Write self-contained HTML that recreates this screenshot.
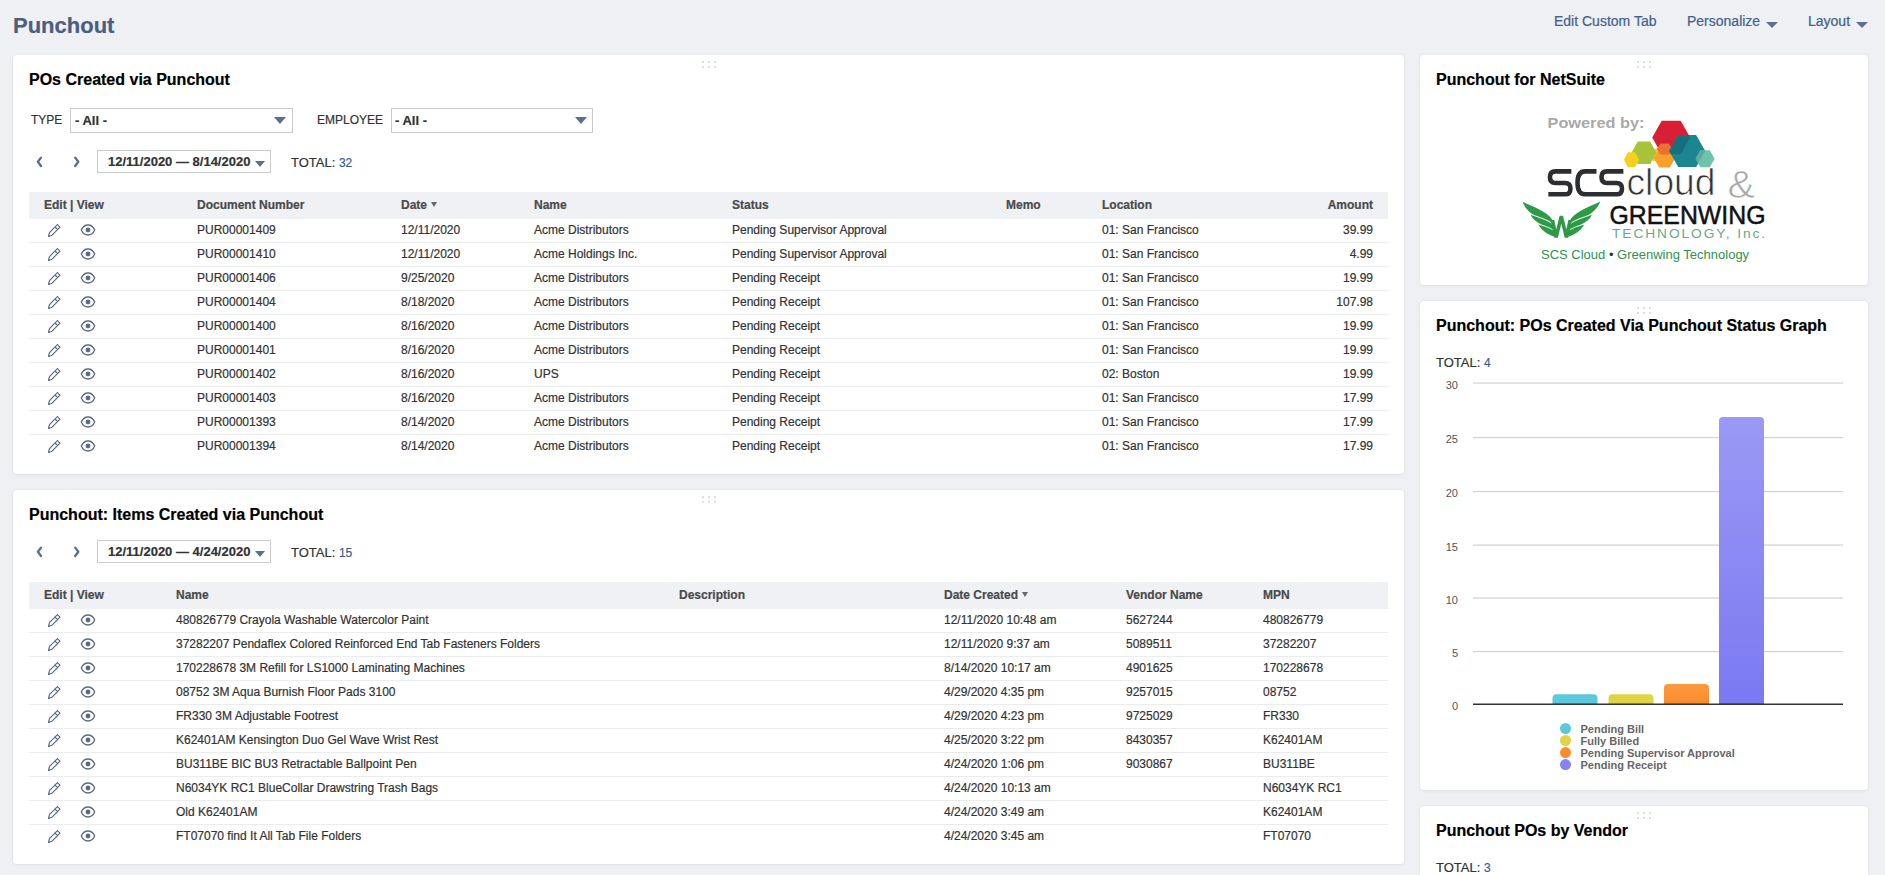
<!DOCTYPE html>
<html><head><meta charset="utf-8"><style>
*{box-sizing:border-box;margin:0;padding:0}
html,body{width:1885px;height:875px;overflow:hidden}
body{background:#eef0f3;font-family:"Liberation Sans",sans-serif;color:#333;position:relative;-webkit-text-stroke:0.2px currentColor}
.pt{position:absolute;left:13px;top:11px;font-size:22px;font-weight:bold;color:#4c5e7c;line-height:30px}
.tl{position:absolute;top:12px;font-size:14px;color:#41608f;line-height:18px;white-space:nowrap}
.tri{position:absolute;width:0;height:0;border-left:6px solid transparent;border-right:6px solid transparent;border-top:6px solid #5a6f92}
.panel{position:absolute;background:#fff;border-radius:4px;box-shadow:0 0 2px rgba(0,0,0,0.07),0 1px 4px rgba(0,0,0,0.05)}
.grip{position:absolute;top:6px;width:15px;height:8px}
.grip i{position:absolute;width:2px;height:2px;background:#dcdfe3}
.ttl{position:absolute;left:16px;font-size:16px;font-weight:bold;color:#000;line-height:22px;white-space:nowrap}
.lbl{position:absolute;font-size:12px;color:#333;line-height:14px}
.sel{position:absolute;border:1px solid #c9cbcf;background:#fff}
.sel span{position:absolute;left:4px;top:4px;font-size:13px;font-weight:bold;color:#333;line-height:15px;white-space:nowrap}
.sel b{position:absolute;width:0;height:0;border-left:6px solid transparent;border-right:6px solid transparent;border-top:7px solid #5a6f92}
.tot{position:absolute;font-size:13px;color:#333;line-height:15px;white-space:nowrap}
.tot a{color:#3a5d92;text-decoration:none;font-size:12px}
.thead{position:absolute;background:#eff1f4;height:27px}
.th{position:absolute;top:6px;font-size:12px;font-weight:bold;color:#4a4a4a;line-height:14px;white-space:nowrap}
.row{position:absolute;height:24px;border-bottom:1px solid #eaecef}
.td{position:absolute;top:4px;font-size:12px;color:#333;line-height:14px;white-space:nowrap}
.td.r{text-align:right}
.ico{position:absolute;top:5px}
</style></head><body>
<div class="pt">Punchout</div>
<div class="tl" style="left:1554px">Edit Custom Tab</div>
<div class="tl" style="left:1687px">Personalize</div><div class="tri" style="left:1766px;top:22px"></div>
<div class="tl" style="left:1808px">Layout</div><div class="tri" style="left:1856px;top:22px"></div>
<div class="panel" style="left:13px;top:55px;width:1391px;height:419px"><div class="grip" style="left:689px"><i style="left:0px;top:0px"></i><i style="left:6px;top:0px"></i><i style="left:12px;top:0px"></i><i style="left:0px;top:5px"></i><i style="left:6px;top:5px"></i><i style="left:12px;top:5px"></i></div><div class="ttl" style="top:14px">POs Created via Punchout</div><div class="lbl" style="left:18px;top:58px">TYPE</div><div class="sel" style="left:57px;top:53px;width:223px;height:25px"><span>- All -</span><b style="left:203px;top:8px"></b></div><div class="lbl" style="left:304px;top:58px">EMPLOYEE</div><div class="sel" style="left:378px;top:53px;width:202px;height:25px"><span style="left:3px">- All -</span><b style="left:183px;top:8px"></b></div><svg style="position:absolute;left:23px;top:101px" width="8" height="12" viewBox="0 0 8 12"><path d="M5,1.6 L1.9,5.8 L5,10" fill="none" stroke="#5b6f93" stroke-width="2.3" stroke-linecap="round" stroke-linejoin="round"/></svg><svg style="position:absolute;left:60px;top:101px" width="8" height="12" viewBox="0 0 8 12"><path d="M2.2,1.6 L5.3,5.8 L2.2,10" fill="none" stroke="#5b6f93" stroke-width="2.3" stroke-linecap="round" stroke-linejoin="round"/></svg><div class="sel" style="left:84px;top:95px;width:174px;height:23px"><span style="left:10px;top:3px">12/11/2020 &#8212; 8/14/2020</span><b style="left:157px;top:10px;border-left-width:5px;border-right-width:5px;border-top-width:6px"></b></div><div class="tot" style="left:278px;top:100px">TOTAL: <a>32</a></div><div class="thead" style="left:16px;top:137px;width:1359px"><div class="th" style="left:15px">Edit | View</div><div class="th" style="left:168px">Document Number</div><div class="th" style="left:372px">Date<i style="display:inline-block;margin-left:4px;border-left:3px solid transparent;border-right:3px solid transparent;border-top:5px solid #666;vertical-align:2px"></i></div><div class="th" style="left:505px">Name</div><div class="th" style="left:703px">Status</div><div class="th" style="left:977px">Memo</div><div class="th" style="left:1073px">Location</div><div class="th" style="right:15px">Amount</div></div><div class="row" style="left:16px;top:164px;width:1359px"><svg class="ico" style="left:19px" width="14" height="14" viewBox="0 0 14 14"><path d="M0.5,12.5 L1.4,8.6 L9.4,0.6 L12.0,3.2 L4.0,11.2 Z M7.0,3.0 L9.6,5.6" fill="none" stroke="#596a89" stroke-width="1.15" stroke-linejoin="round"/><path d="M0.4,12.6 L0.8,10.9 L2.1,12.2 Z" fill="#596a89"/></svg><svg class="ico" style="left:51px" width="16" height="13" viewBox="0 0 16 13"><path d="M1.3,6 C3,2.2 5.5,1 8,1 C10.5,1 13,2.2 14.7,6 C13,9.8 10.5,11 8,11 C5.5,11 3,9.8 1.3,6 Z" fill="none" stroke="#596a89" stroke-width="1.3"/><circle cx="8" cy="6" r="2.4" fill="#596a89"/></svg><div class="td" style="left:168px">PUR00001409</div><div class="td" style="left:372px">12/11/2020</div><div class="td" style="left:505px">Acme Distributors</div><div class="td" style="left:703px">Pending Supervisor Approval</div><div class="td" style="left:977px"></div><div class="td" style="left:1073px">01: San Francisco</div><div class="td" style="right:15px">39.99</div></div><div class="row" style="left:16px;top:188px;width:1359px"><svg class="ico" style="left:19px" width="14" height="14" viewBox="0 0 14 14"><path d="M0.5,12.5 L1.4,8.6 L9.4,0.6 L12.0,3.2 L4.0,11.2 Z M7.0,3.0 L9.6,5.6" fill="none" stroke="#596a89" stroke-width="1.15" stroke-linejoin="round"/><path d="M0.4,12.6 L0.8,10.9 L2.1,12.2 Z" fill="#596a89"/></svg><svg class="ico" style="left:51px" width="16" height="13" viewBox="0 0 16 13"><path d="M1.3,6 C3,2.2 5.5,1 8,1 C10.5,1 13,2.2 14.7,6 C13,9.8 10.5,11 8,11 C5.5,11 3,9.8 1.3,6 Z" fill="none" stroke="#596a89" stroke-width="1.3"/><circle cx="8" cy="6" r="2.4" fill="#596a89"/></svg><div class="td" style="left:168px">PUR00001410</div><div class="td" style="left:372px">12/11/2020</div><div class="td" style="left:505px">Acme Holdings Inc.</div><div class="td" style="left:703px">Pending Supervisor Approval</div><div class="td" style="left:977px"></div><div class="td" style="left:1073px">01: San Francisco</div><div class="td" style="right:15px">4.99</div></div><div class="row" style="left:16px;top:212px;width:1359px"><svg class="ico" style="left:19px" width="14" height="14" viewBox="0 0 14 14"><path d="M0.5,12.5 L1.4,8.6 L9.4,0.6 L12.0,3.2 L4.0,11.2 Z M7.0,3.0 L9.6,5.6" fill="none" stroke="#596a89" stroke-width="1.15" stroke-linejoin="round"/><path d="M0.4,12.6 L0.8,10.9 L2.1,12.2 Z" fill="#596a89"/></svg><svg class="ico" style="left:51px" width="16" height="13" viewBox="0 0 16 13"><path d="M1.3,6 C3,2.2 5.5,1 8,1 C10.5,1 13,2.2 14.7,6 C13,9.8 10.5,11 8,11 C5.5,11 3,9.8 1.3,6 Z" fill="none" stroke="#596a89" stroke-width="1.3"/><circle cx="8" cy="6" r="2.4" fill="#596a89"/></svg><div class="td" style="left:168px">PUR00001406</div><div class="td" style="left:372px">9/25/2020</div><div class="td" style="left:505px">Acme Distributors</div><div class="td" style="left:703px">Pending Receipt</div><div class="td" style="left:977px"></div><div class="td" style="left:1073px">01: San Francisco</div><div class="td" style="right:15px">19.99</div></div><div class="row" style="left:16px;top:236px;width:1359px"><svg class="ico" style="left:19px" width="14" height="14" viewBox="0 0 14 14"><path d="M0.5,12.5 L1.4,8.6 L9.4,0.6 L12.0,3.2 L4.0,11.2 Z M7.0,3.0 L9.6,5.6" fill="none" stroke="#596a89" stroke-width="1.15" stroke-linejoin="round"/><path d="M0.4,12.6 L0.8,10.9 L2.1,12.2 Z" fill="#596a89"/></svg><svg class="ico" style="left:51px" width="16" height="13" viewBox="0 0 16 13"><path d="M1.3,6 C3,2.2 5.5,1 8,1 C10.5,1 13,2.2 14.7,6 C13,9.8 10.5,11 8,11 C5.5,11 3,9.8 1.3,6 Z" fill="none" stroke="#596a89" stroke-width="1.3"/><circle cx="8" cy="6" r="2.4" fill="#596a89"/></svg><div class="td" style="left:168px">PUR00001404</div><div class="td" style="left:372px">8/18/2020</div><div class="td" style="left:505px">Acme Distributors</div><div class="td" style="left:703px">Pending Receipt</div><div class="td" style="left:977px"></div><div class="td" style="left:1073px">01: San Francisco</div><div class="td" style="right:15px">107.98</div></div><div class="row" style="left:16px;top:260px;width:1359px"><svg class="ico" style="left:19px" width="14" height="14" viewBox="0 0 14 14"><path d="M0.5,12.5 L1.4,8.6 L9.4,0.6 L12.0,3.2 L4.0,11.2 Z M7.0,3.0 L9.6,5.6" fill="none" stroke="#596a89" stroke-width="1.15" stroke-linejoin="round"/><path d="M0.4,12.6 L0.8,10.9 L2.1,12.2 Z" fill="#596a89"/></svg><svg class="ico" style="left:51px" width="16" height="13" viewBox="0 0 16 13"><path d="M1.3,6 C3,2.2 5.5,1 8,1 C10.5,1 13,2.2 14.7,6 C13,9.8 10.5,11 8,11 C5.5,11 3,9.8 1.3,6 Z" fill="none" stroke="#596a89" stroke-width="1.3"/><circle cx="8" cy="6" r="2.4" fill="#596a89"/></svg><div class="td" style="left:168px">PUR00001400</div><div class="td" style="left:372px">8/16/2020</div><div class="td" style="left:505px">Acme Distributors</div><div class="td" style="left:703px">Pending Receipt</div><div class="td" style="left:977px"></div><div class="td" style="left:1073px">01: San Francisco</div><div class="td" style="right:15px">19.99</div></div><div class="row" style="left:16px;top:284px;width:1359px"><svg class="ico" style="left:19px" width="14" height="14" viewBox="0 0 14 14"><path d="M0.5,12.5 L1.4,8.6 L9.4,0.6 L12.0,3.2 L4.0,11.2 Z M7.0,3.0 L9.6,5.6" fill="none" stroke="#596a89" stroke-width="1.15" stroke-linejoin="round"/><path d="M0.4,12.6 L0.8,10.9 L2.1,12.2 Z" fill="#596a89"/></svg><svg class="ico" style="left:51px" width="16" height="13" viewBox="0 0 16 13"><path d="M1.3,6 C3,2.2 5.5,1 8,1 C10.5,1 13,2.2 14.7,6 C13,9.8 10.5,11 8,11 C5.5,11 3,9.8 1.3,6 Z" fill="none" stroke="#596a89" stroke-width="1.3"/><circle cx="8" cy="6" r="2.4" fill="#596a89"/></svg><div class="td" style="left:168px">PUR00001401</div><div class="td" style="left:372px">8/16/2020</div><div class="td" style="left:505px">Acme Distributors</div><div class="td" style="left:703px">Pending Receipt</div><div class="td" style="left:977px"></div><div class="td" style="left:1073px">01: San Francisco</div><div class="td" style="right:15px">19.99</div></div><div class="row" style="left:16px;top:308px;width:1359px"><svg class="ico" style="left:19px" width="14" height="14" viewBox="0 0 14 14"><path d="M0.5,12.5 L1.4,8.6 L9.4,0.6 L12.0,3.2 L4.0,11.2 Z M7.0,3.0 L9.6,5.6" fill="none" stroke="#596a89" stroke-width="1.15" stroke-linejoin="round"/><path d="M0.4,12.6 L0.8,10.9 L2.1,12.2 Z" fill="#596a89"/></svg><svg class="ico" style="left:51px" width="16" height="13" viewBox="0 0 16 13"><path d="M1.3,6 C3,2.2 5.5,1 8,1 C10.5,1 13,2.2 14.7,6 C13,9.8 10.5,11 8,11 C5.5,11 3,9.8 1.3,6 Z" fill="none" stroke="#596a89" stroke-width="1.3"/><circle cx="8" cy="6" r="2.4" fill="#596a89"/></svg><div class="td" style="left:168px">PUR00001402</div><div class="td" style="left:372px">8/16/2020</div><div class="td" style="left:505px">UPS</div><div class="td" style="left:703px">Pending Receipt</div><div class="td" style="left:977px"></div><div class="td" style="left:1073px">02: Boston</div><div class="td" style="right:15px">19.99</div></div><div class="row" style="left:16px;top:332px;width:1359px"><svg class="ico" style="left:19px" width="14" height="14" viewBox="0 0 14 14"><path d="M0.5,12.5 L1.4,8.6 L9.4,0.6 L12.0,3.2 L4.0,11.2 Z M7.0,3.0 L9.6,5.6" fill="none" stroke="#596a89" stroke-width="1.15" stroke-linejoin="round"/><path d="M0.4,12.6 L0.8,10.9 L2.1,12.2 Z" fill="#596a89"/></svg><svg class="ico" style="left:51px" width="16" height="13" viewBox="0 0 16 13"><path d="M1.3,6 C3,2.2 5.5,1 8,1 C10.5,1 13,2.2 14.7,6 C13,9.8 10.5,11 8,11 C5.5,11 3,9.8 1.3,6 Z" fill="none" stroke="#596a89" stroke-width="1.3"/><circle cx="8" cy="6" r="2.4" fill="#596a89"/></svg><div class="td" style="left:168px">PUR00001403</div><div class="td" style="left:372px">8/16/2020</div><div class="td" style="left:505px">Acme Distributors</div><div class="td" style="left:703px">Pending Receipt</div><div class="td" style="left:977px"></div><div class="td" style="left:1073px">01: San Francisco</div><div class="td" style="right:15px">17.99</div></div><div class="row" style="left:16px;top:356px;width:1359px"><svg class="ico" style="left:19px" width="14" height="14" viewBox="0 0 14 14"><path d="M0.5,12.5 L1.4,8.6 L9.4,0.6 L12.0,3.2 L4.0,11.2 Z M7.0,3.0 L9.6,5.6" fill="none" stroke="#596a89" stroke-width="1.15" stroke-linejoin="round"/><path d="M0.4,12.6 L0.8,10.9 L2.1,12.2 Z" fill="#596a89"/></svg><svg class="ico" style="left:51px" width="16" height="13" viewBox="0 0 16 13"><path d="M1.3,6 C3,2.2 5.5,1 8,1 C10.5,1 13,2.2 14.7,6 C13,9.8 10.5,11 8,11 C5.5,11 3,9.8 1.3,6 Z" fill="none" stroke="#596a89" stroke-width="1.3"/><circle cx="8" cy="6" r="2.4" fill="#596a89"/></svg><div class="td" style="left:168px">PUR00001393</div><div class="td" style="left:372px">8/14/2020</div><div class="td" style="left:505px">Acme Distributors</div><div class="td" style="left:703px">Pending Receipt</div><div class="td" style="left:977px"></div><div class="td" style="left:1073px">01: San Francisco</div><div class="td" style="right:15px">17.99</div></div><div class="row" style="left:16px;top:380px;width:1359px;border-bottom:none"><svg class="ico" style="left:19px" width="14" height="14" viewBox="0 0 14 14"><path d="M0.5,12.5 L1.4,8.6 L9.4,0.6 L12.0,3.2 L4.0,11.2 Z M7.0,3.0 L9.6,5.6" fill="none" stroke="#596a89" stroke-width="1.15" stroke-linejoin="round"/><path d="M0.4,12.6 L0.8,10.9 L2.1,12.2 Z" fill="#596a89"/></svg><svg class="ico" style="left:51px" width="16" height="13" viewBox="0 0 16 13"><path d="M1.3,6 C3,2.2 5.5,1 8,1 C10.5,1 13,2.2 14.7,6 C13,9.8 10.5,11 8,11 C5.5,11 3,9.8 1.3,6 Z" fill="none" stroke="#596a89" stroke-width="1.3"/><circle cx="8" cy="6" r="2.4" fill="#596a89"/></svg><div class="td" style="left:168px">PUR00001394</div><div class="td" style="left:372px">8/14/2020</div><div class="td" style="left:505px">Acme Distributors</div><div class="td" style="left:703px">Pending Receipt</div><div class="td" style="left:977px"></div><div class="td" style="left:1073px">01: San Francisco</div><div class="td" style="right:15px">17.99</div></div></div>
<div class="panel" style="left:13px;top:490px;width:1391px;height:374px"><div class="grip" style="left:689px"><i style="left:0px;top:0px"></i><i style="left:6px;top:0px"></i><i style="left:12px;top:0px"></i><i style="left:0px;top:5px"></i><i style="left:6px;top:5px"></i><i style="left:12px;top:5px"></i></div><div class="ttl" style="top:14px">Punchout: Items Created via Punchout</div><svg style="position:absolute;left:23px;top:56px" width="8" height="12" viewBox="0 0 8 12"><path d="M5,1.6 L1.9,5.8 L5,10" fill="none" stroke="#5b6f93" stroke-width="2.3" stroke-linecap="round" stroke-linejoin="round"/></svg><svg style="position:absolute;left:60px;top:56px" width="8" height="12" viewBox="0 0 8 12"><path d="M2.2,1.6 L5.3,5.8 L2.2,10" fill="none" stroke="#5b6f93" stroke-width="2.3" stroke-linecap="round" stroke-linejoin="round"/></svg><div class="sel" style="left:84px;top:50px;width:174px;height:23px"><span style="left:10px;top:3px">12/11/2020 &#8212; 4/24/2020</span><b style="left:157px;top:10px;border-left-width:5px;border-right-width:5px;border-top-width:6px"></b></div><div class="tot" style="left:278px;top:55px">TOTAL: <a>15</a></div><div class="thead" style="left:16px;top:92px;width:1359px"><div class="th" style="left:15px">Edit | View</div><div class="th" style="left:147px">Name</div><div class="th" style="left:650px">Description</div><div class="th" style="left:915px">Date Created<i style="display:inline-block;margin-left:4px;border-left:3px solid transparent;border-right:3px solid transparent;border-top:5px solid #666;vertical-align:2px"></i></div><div class="th" style="left:1097px">Vendor Name</div><div class="th" style="left:1234px">MPN</div></div><div class="row" style="left:16px;top:119px;width:1359px"><svg class="ico" style="left:19px" width="14" height="14" viewBox="0 0 14 14"><path d="M0.5,12.5 L1.4,8.6 L9.4,0.6 L12.0,3.2 L4.0,11.2 Z M7.0,3.0 L9.6,5.6" fill="none" stroke="#596a89" stroke-width="1.15" stroke-linejoin="round"/><path d="M0.4,12.6 L0.8,10.9 L2.1,12.2 Z" fill="#596a89"/></svg><svg class="ico" style="left:51px" width="16" height="13" viewBox="0 0 16 13"><path d="M1.3,6 C3,2.2 5.5,1 8,1 C10.5,1 13,2.2 14.7,6 C13,9.8 10.5,11 8,11 C5.5,11 3,9.8 1.3,6 Z" fill="none" stroke="#596a89" stroke-width="1.3"/><circle cx="8" cy="6" r="2.4" fill="#596a89"/></svg><div class="td" style="left:147px">480826779 Crayola Washable Watercolor Paint</div><div class="td" style="left:650px"></div><div class="td" style="left:915px">12/11/2020 10:48 am</div><div class="td" style="left:1097px">5627244</div><div class="td" style="left:1234px">480826779</div></div><div class="row" style="left:16px;top:143px;width:1359px"><svg class="ico" style="left:19px" width="14" height="14" viewBox="0 0 14 14"><path d="M0.5,12.5 L1.4,8.6 L9.4,0.6 L12.0,3.2 L4.0,11.2 Z M7.0,3.0 L9.6,5.6" fill="none" stroke="#596a89" stroke-width="1.15" stroke-linejoin="round"/><path d="M0.4,12.6 L0.8,10.9 L2.1,12.2 Z" fill="#596a89"/></svg><svg class="ico" style="left:51px" width="16" height="13" viewBox="0 0 16 13"><path d="M1.3,6 C3,2.2 5.5,1 8,1 C10.5,1 13,2.2 14.7,6 C13,9.8 10.5,11 8,11 C5.5,11 3,9.8 1.3,6 Z" fill="none" stroke="#596a89" stroke-width="1.3"/><circle cx="8" cy="6" r="2.4" fill="#596a89"/></svg><div class="td" style="left:147px">37282207 Pendaflex Colored Reinforced End Tab Fasteners Folders</div><div class="td" style="left:650px"></div><div class="td" style="left:915px">12/11/2020 9:37 am</div><div class="td" style="left:1097px">5089511</div><div class="td" style="left:1234px">37282207</div></div><div class="row" style="left:16px;top:167px;width:1359px"><svg class="ico" style="left:19px" width="14" height="14" viewBox="0 0 14 14"><path d="M0.5,12.5 L1.4,8.6 L9.4,0.6 L12.0,3.2 L4.0,11.2 Z M7.0,3.0 L9.6,5.6" fill="none" stroke="#596a89" stroke-width="1.15" stroke-linejoin="round"/><path d="M0.4,12.6 L0.8,10.9 L2.1,12.2 Z" fill="#596a89"/></svg><svg class="ico" style="left:51px" width="16" height="13" viewBox="0 0 16 13"><path d="M1.3,6 C3,2.2 5.5,1 8,1 C10.5,1 13,2.2 14.7,6 C13,9.8 10.5,11 8,11 C5.5,11 3,9.8 1.3,6 Z" fill="none" stroke="#596a89" stroke-width="1.3"/><circle cx="8" cy="6" r="2.4" fill="#596a89"/></svg><div class="td" style="left:147px">170228678 3M Refill for LS1000 Laminating Machines</div><div class="td" style="left:650px"></div><div class="td" style="left:915px">8/14/2020 10:17 am</div><div class="td" style="left:1097px">4901625</div><div class="td" style="left:1234px">170228678</div></div><div class="row" style="left:16px;top:191px;width:1359px"><svg class="ico" style="left:19px" width="14" height="14" viewBox="0 0 14 14"><path d="M0.5,12.5 L1.4,8.6 L9.4,0.6 L12.0,3.2 L4.0,11.2 Z M7.0,3.0 L9.6,5.6" fill="none" stroke="#596a89" stroke-width="1.15" stroke-linejoin="round"/><path d="M0.4,12.6 L0.8,10.9 L2.1,12.2 Z" fill="#596a89"/></svg><svg class="ico" style="left:51px" width="16" height="13" viewBox="0 0 16 13"><path d="M1.3,6 C3,2.2 5.5,1 8,1 C10.5,1 13,2.2 14.7,6 C13,9.8 10.5,11 8,11 C5.5,11 3,9.8 1.3,6 Z" fill="none" stroke="#596a89" stroke-width="1.3"/><circle cx="8" cy="6" r="2.4" fill="#596a89"/></svg><div class="td" style="left:147px">08752 3M Aqua Burnish Floor Pads 3100</div><div class="td" style="left:650px"></div><div class="td" style="left:915px">4/29/2020 4:35 pm</div><div class="td" style="left:1097px">9257015</div><div class="td" style="left:1234px">08752</div></div><div class="row" style="left:16px;top:215px;width:1359px"><svg class="ico" style="left:19px" width="14" height="14" viewBox="0 0 14 14"><path d="M0.5,12.5 L1.4,8.6 L9.4,0.6 L12.0,3.2 L4.0,11.2 Z M7.0,3.0 L9.6,5.6" fill="none" stroke="#596a89" stroke-width="1.15" stroke-linejoin="round"/><path d="M0.4,12.6 L0.8,10.9 L2.1,12.2 Z" fill="#596a89"/></svg><svg class="ico" style="left:51px" width="16" height="13" viewBox="0 0 16 13"><path d="M1.3,6 C3,2.2 5.5,1 8,1 C10.5,1 13,2.2 14.7,6 C13,9.8 10.5,11 8,11 C5.5,11 3,9.8 1.3,6 Z" fill="none" stroke="#596a89" stroke-width="1.3"/><circle cx="8" cy="6" r="2.4" fill="#596a89"/></svg><div class="td" style="left:147px">FR330 3M Adjustable Footrest</div><div class="td" style="left:650px"></div><div class="td" style="left:915px">4/29/2020 4:23 pm</div><div class="td" style="left:1097px">9725029</div><div class="td" style="left:1234px">FR330</div></div><div class="row" style="left:16px;top:239px;width:1359px"><svg class="ico" style="left:19px" width="14" height="14" viewBox="0 0 14 14"><path d="M0.5,12.5 L1.4,8.6 L9.4,0.6 L12.0,3.2 L4.0,11.2 Z M7.0,3.0 L9.6,5.6" fill="none" stroke="#596a89" stroke-width="1.15" stroke-linejoin="round"/><path d="M0.4,12.6 L0.8,10.9 L2.1,12.2 Z" fill="#596a89"/></svg><svg class="ico" style="left:51px" width="16" height="13" viewBox="0 0 16 13"><path d="M1.3,6 C3,2.2 5.5,1 8,1 C10.5,1 13,2.2 14.7,6 C13,9.8 10.5,11 8,11 C5.5,11 3,9.8 1.3,6 Z" fill="none" stroke="#596a89" stroke-width="1.3"/><circle cx="8" cy="6" r="2.4" fill="#596a89"/></svg><div class="td" style="left:147px">K62401AM Kensington Duo Gel Wave Wrist Rest</div><div class="td" style="left:650px"></div><div class="td" style="left:915px">4/25/2020 3:22 pm</div><div class="td" style="left:1097px">8430357</div><div class="td" style="left:1234px">K62401AM</div></div><div class="row" style="left:16px;top:263px;width:1359px"><svg class="ico" style="left:19px" width="14" height="14" viewBox="0 0 14 14"><path d="M0.5,12.5 L1.4,8.6 L9.4,0.6 L12.0,3.2 L4.0,11.2 Z M7.0,3.0 L9.6,5.6" fill="none" stroke="#596a89" stroke-width="1.15" stroke-linejoin="round"/><path d="M0.4,12.6 L0.8,10.9 L2.1,12.2 Z" fill="#596a89"/></svg><svg class="ico" style="left:51px" width="16" height="13" viewBox="0 0 16 13"><path d="M1.3,6 C3,2.2 5.5,1 8,1 C10.5,1 13,2.2 14.7,6 C13,9.8 10.5,11 8,11 C5.5,11 3,9.8 1.3,6 Z" fill="none" stroke="#596a89" stroke-width="1.3"/><circle cx="8" cy="6" r="2.4" fill="#596a89"/></svg><div class="td" style="left:147px">BU311BE BIC BU3 Retractable Ballpoint Pen</div><div class="td" style="left:650px"></div><div class="td" style="left:915px">4/24/2020 1:06 pm</div><div class="td" style="left:1097px">9030867</div><div class="td" style="left:1234px">BU311BE</div></div><div class="row" style="left:16px;top:287px;width:1359px"><svg class="ico" style="left:19px" width="14" height="14" viewBox="0 0 14 14"><path d="M0.5,12.5 L1.4,8.6 L9.4,0.6 L12.0,3.2 L4.0,11.2 Z M7.0,3.0 L9.6,5.6" fill="none" stroke="#596a89" stroke-width="1.15" stroke-linejoin="round"/><path d="M0.4,12.6 L0.8,10.9 L2.1,12.2 Z" fill="#596a89"/></svg><svg class="ico" style="left:51px" width="16" height="13" viewBox="0 0 16 13"><path d="M1.3,6 C3,2.2 5.5,1 8,1 C10.5,1 13,2.2 14.7,6 C13,9.8 10.5,11 8,11 C5.5,11 3,9.8 1.3,6 Z" fill="none" stroke="#596a89" stroke-width="1.3"/><circle cx="8" cy="6" r="2.4" fill="#596a89"/></svg><div class="td" style="left:147px">N6034YK RC1 BlueCollar Drawstring Trash Bags</div><div class="td" style="left:650px"></div><div class="td" style="left:915px">4/24/2020 10:13 am</div><div class="td" style="left:1097px"></div><div class="td" style="left:1234px">N6034YK RC1</div></div><div class="row" style="left:16px;top:311px;width:1359px"><svg class="ico" style="left:19px" width="14" height="14" viewBox="0 0 14 14"><path d="M0.5,12.5 L1.4,8.6 L9.4,0.6 L12.0,3.2 L4.0,11.2 Z M7.0,3.0 L9.6,5.6" fill="none" stroke="#596a89" stroke-width="1.15" stroke-linejoin="round"/><path d="M0.4,12.6 L0.8,10.9 L2.1,12.2 Z" fill="#596a89"/></svg><svg class="ico" style="left:51px" width="16" height="13" viewBox="0 0 16 13"><path d="M1.3,6 C3,2.2 5.5,1 8,1 C10.5,1 13,2.2 14.7,6 C13,9.8 10.5,11 8,11 C5.5,11 3,9.8 1.3,6 Z" fill="none" stroke="#596a89" stroke-width="1.3"/><circle cx="8" cy="6" r="2.4" fill="#596a89"/></svg><div class="td" style="left:147px">Old K62401AM</div><div class="td" style="left:650px"></div><div class="td" style="left:915px">4/24/2020 3:49 am</div><div class="td" style="left:1097px"></div><div class="td" style="left:1234px">K62401AM</div></div><div class="row" style="left:16px;top:335px;width:1359px;border-bottom:none"><svg class="ico" style="left:19px" width="14" height="14" viewBox="0 0 14 14"><path d="M0.5,12.5 L1.4,8.6 L9.4,0.6 L12.0,3.2 L4.0,11.2 Z M7.0,3.0 L9.6,5.6" fill="none" stroke="#596a89" stroke-width="1.15" stroke-linejoin="round"/><path d="M0.4,12.6 L0.8,10.9 L2.1,12.2 Z" fill="#596a89"/></svg><svg class="ico" style="left:51px" width="16" height="13" viewBox="0 0 16 13"><path d="M1.3,6 C3,2.2 5.5,1 8,1 C10.5,1 13,2.2 14.7,6 C13,9.8 10.5,11 8,11 C5.5,11 3,9.8 1.3,6 Z" fill="none" stroke="#596a89" stroke-width="1.3"/><circle cx="8" cy="6" r="2.4" fill="#596a89"/></svg><div class="td" style="left:147px">FT07070 find It All Tab File Folders</div><div class="td" style="left:650px"></div><div class="td" style="left:915px">4/24/2020 3:45 am</div><div class="td" style="left:1097px"></div><div class="td" style="left:1234px">FT07070</div></div></div>
<div class="panel" style="left:1420px;top:55px;width:448px;height:230px"><div class="grip" style="left:217px"><i style="left:0px;top:0px"></i><i style="left:6px;top:0px"></i><i style="left:12px;top:0px"></i><i style="left:0px;top:5px"></i><i style="left:6px;top:5px"></i><i style="left:12px;top:5px"></i></div><div class="ttl" style="top:14px">Punchout for NetSuite</div><svg style="position:absolute;left:0;top:0" width="448" height="230" viewBox="1420 55 448 230"><text x="1547.5" y="128" font-family="Liberation Sans" font-weight="bold" font-size="14" fill="#a9a9a9" textLength="97" lengthAdjust="spacingAndGlyphs">Powered by:</text><defs><clipPath id="cr"><polygon points="1652.2,137.5 1661.7,120.8 1680.7,120.8 1690.2,137.5 1680.7,154.2 1661.7,154.2"/></clipPath><clipPath id="ct"><polygon points="1669.2,150.9 1678.2,134.9 1696.2,134.9 1705.2,150.9 1696.2,166.9 1678.2,166.9"/></clipPath></defs><polygon points="1650.0,155.0 1653.0,149.0 1659.0,149.0 1662.0,155.0 1659.0,161.0 1653.0,161.0" fill="#f7cf1f"/><polygon points="1631.5,152.7 1637.8,141.5 1650.2,141.5 1656.5,152.7 1650.2,163.9 1637.8,163.9" fill="#a6c33a"/><polygon points="1624.0,159.7 1627.8,152.2 1635.2,152.2 1639.0,159.7 1635.2,167.2 1627.8,167.2" fill="#f7cf1f"/><polygon points="1652.2,137.5 1661.7,120.8 1680.7,120.8 1690.2,137.5 1680.7,154.2 1661.7,154.2" fill="#d91f35"/><polygon points="1654.0,158.5 1659.2,149.5 1669.8,149.5 1675.0,158.5 1669.8,167.5 1659.2,167.5" fill="#f99f2b"/><polygon points="1654.0,158.5 1659.2,149.5 1669.8,149.5 1675.0,158.5 1669.8,167.5 1659.2,167.5" fill="#ee6f2f" clip-path="url(#cr)"/><polygon points="1656.5,149.0 1660.5,143.5 1668.5,143.5 1672.5,149.0 1668.5,154.5 1660.5,154.5" fill="#ee6f2f"/><polygon points="1669.2,150.9 1678.2,134.9 1696.2,134.9 1705.2,150.9 1696.2,166.9 1678.2,166.9" fill="#1b8592"/><polygon points="1669.2,150.9 1678.2,134.9 1696.2,134.9 1705.2,150.9 1696.2,166.9 1678.2,166.9" fill="#156f7c" clip-path="url(#cr)"/><polygon points="1695.6,158.7 1700.3,150.2 1709.8,150.2 1714.6,158.7 1709.8,167.2 1700.3,167.2" fill="#70c2ac"/><polygon points="1695.6,158.7 1700.3,150.2 1709.8,150.2 1714.6,158.7 1709.8,167.2 1700.3,167.2" fill="#5eab9e" clip-path="url(#ct)"/><g transform="translate(1544,165) scale(0.04562)" fill="none" stroke="#2c2e33" stroke-width="100"><path d="M600,140 L250,140 Q130,140 130,265 Q130,395 250,395 L460,395 Q580,395 580,518 Q580,642 460,642 L95,642"/><path d="M1150,140 L900,140 Q735,140 735,390 Q735,642 900,642 L1590,642 Q1710,642 1710,518 Q1710,395 1590,395 L1380,395 Q1260,395 1260,265 Q1260,140 1380,140 L1740,140"/></g><text x="1626.5" y="195.4" font-family="Liberation Sans" font-size="36" fill="#333" stroke="#fff" stroke-width="0.7" textLength="89" lengthAdjust="spacingAndGlyphs">cloud</text><text x="1727.5" y="198" font-family="Liberation Sans" font-size="38" fill="#a8a8a8" stroke="#fff" stroke-width="0.6" textLength="27.5" lengthAdjust="spacingAndGlyphs">&amp;</text><text x="1609.5" y="224" font-family="Liberation Sans" font-size="26.5" fill="#111" stroke="#111" stroke-width="0.5" textLength="156" lengthAdjust="spacingAndGlyphs">GREENWING</text><text x="1612" y="238" font-family="Liberation Sans" font-size="12.8" letter-spacing="1.8" fill="#6aa886" textLength="155" lengthAdjust="spacingAndGlyphs">TECHNOLOGY, Inc.</text><g transform="translate(1515,195) scale(0.05717)" fill="#2e9a48"><path d="M130,120 C380,230 610,320 665,460 L725,740 C600,700 470,640 405,510 L470,522 C380,470 300,420 275,340 L330,352 C230,290 160,200 130,120 Z"/><path d="M130,120 C380,230 610,320 665,460 L725,740 C600,700 470,640 405,510 L470,522 C380,470 300,420 275,340 L330,352 C230,290 160,200 130,120 Z" transform="translate(1620,0) scale(-1,1)"/><path d="M275,338 C420,390 590,440 655,500 M405,508 C500,535 600,570 665,610" fill="none" stroke="#eaf8ec" stroke-width="18"/><path d="M275,338 C420,390 590,440 655,500 M405,508 C500,535 600,570 665,610" fill="none" stroke="#eaf8ec" stroke-width="18" transform="translate(1620,0) scale(-1,1)"/><path d="M655,440 L720,740 L810,370 L900,740 L965,440" fill="none" stroke="#2e9a48" stroke-width="62" stroke-linejoin="miter"/></g><text x="1541" y="258.7" font-family="Liberation Sans" font-size="13" fill="#2e9350">SCS Cloud <tspan fill="#333">&#8226;</tspan> Greenwing Technology</text></svg></div>
<div class="panel" style="left:1420px;top:301px;width:448px;height:489px"><div class="grip" style="left:217px"><i style="left:0px;top:0px"></i><i style="left:6px;top:0px"></i><i style="left:12px;top:0px"></i><i style="left:0px;top:5px"></i><i style="left:6px;top:5px"></i><i style="left:12px;top:5px"></i></div><div class="ttl" style="top:14px">Punchout: POs Created Via Punchout Status Graph</div><div class="tot" style="left:16px;top:54px">TOTAL: <a>4</a></div><svg style="position:absolute;left:0;top:0" width="448" height="489" viewBox="1420 301 448 489"><defs><linearGradient id="gp" x1="0" y1="0" x2="0" y2="1"><stop offset="0" stop-color="#9b99f4"/><stop offset="1" stop-color="#7b79f2"/></linearGradient><linearGradient id="go" x1="0" y1="0" x2="0" y2="1"><stop offset="0" stop-color="#fd9a3e"/><stop offset="1" stop-color="#fb8a2c"/></linearGradient></defs><rect x="1473" y="382.4" width="370" height="1.3" fill="#d4d4d4"/><text x="1458" y="388.8" text-anchor="end" font-family="Liberation Sans" font-size="11" fill="#555">30</text><rect x="1473" y="436.9" width="370" height="1.3" fill="#d4d4d4"/><text x="1458" y="443.3" text-anchor="end" font-family="Liberation Sans" font-size="11" fill="#555">25</text><rect x="1473" y="490.9" width="370" height="1.3" fill="#d4d4d4"/><text x="1458" y="497.3" text-anchor="end" font-family="Liberation Sans" font-size="11" fill="#555">20</text><rect x="1473" y="544.4" width="370" height="1.3" fill="#d4d4d4"/><text x="1458" y="550.8" text-anchor="end" font-family="Liberation Sans" font-size="11" fill="#555">15</text><rect x="1473" y="597.4" width="370" height="1.3" fill="#d4d4d4"/><text x="1458" y="603.8" text-anchor="end" font-family="Liberation Sans" font-size="11" fill="#555">10</text><rect x="1473" y="650.9" width="370" height="1.3" fill="#d4d4d4"/><text x="1458" y="657.3" text-anchor="end" font-family="Liberation Sans" font-size="11" fill="#555">5</text><text x="1458" y="709.8" text-anchor="end" font-family="Liberation Sans" font-size="11" fill="#555">0</text><path d="M1552.5,704 L1552.5,698.3 Q1552.5,694.3 1556.5,694.3 L1593.5,694.3 Q1597.5,694.3 1597.5,698.3 L1597.5,704 Z" fill="#5bc8dc"/><path d="M1608.5,704 L1608.5,698.3 Q1608.5,694.3 1612.5,694.3 L1649.5,694.3 Q1653.5,694.3 1653.5,698.3 L1653.5,704 Z" fill="#e0d346"/><path d="M1664.0,704 L1664.0,688.0 Q1664.0,684.0 1668.0,684.0 L1705.0,684.0 Q1709.0,684.0 1709.0,688.0 L1709.0,704 Z" fill="url(#go)"/><path d="M1719.0,704 L1719.0,421.0 Q1719.0,417.0 1723.0,417.0 L1760.0,417.0 Q1764.0,417.0 1764.0,421.0 L1764.0,704 Z" fill="url(#gp)"/><rect x="1473" y="703.6" width="370" height="1.2" fill="#000"/><circle cx="1565.5" cy="728.5" r="5.5" fill="#5bc8dc"/><text x="1580.5" y="732.5" font-family="Liberation Sans" font-weight="bold" font-size="11" fill="#666">Pending Bill</text><circle cx="1565.5" cy="740.5" r="5.5" fill="#e0d346"/><text x="1580.5" y="744.5" font-family="Liberation Sans" font-weight="bold" font-size="11" fill="#666">Fully Billed</text><circle cx="1565.5" cy="752.6" r="5.5" fill="#fb8c2e"/><text x="1580.5" y="756.6" font-family="Liberation Sans" font-weight="bold" font-size="11" fill="#666">Pending Supervisor Approval</text><circle cx="1565.5" cy="764.6" r="5.5" fill="#8483f3"/><text x="1580.5" y="768.6" font-family="Liberation Sans" font-weight="bold" font-size="11" fill="#666">Pending Receipt</text></svg></div>
<div class="panel" style="left:1420px;top:806px;width:448px;height:120px"><div class="grip" style="left:217px"><i style="left:0px;top:0px"></i><i style="left:6px;top:0px"></i><i style="left:12px;top:0px"></i><i style="left:0px;top:5px"></i><i style="left:6px;top:5px"></i><i style="left:12px;top:5px"></i></div><div class="ttl" style="top:14px">Punchout POs by Vendor</div><div class="tot" style="left:16px;top:54px">TOTAL: <a>3</a></div></div>
</body></html>
